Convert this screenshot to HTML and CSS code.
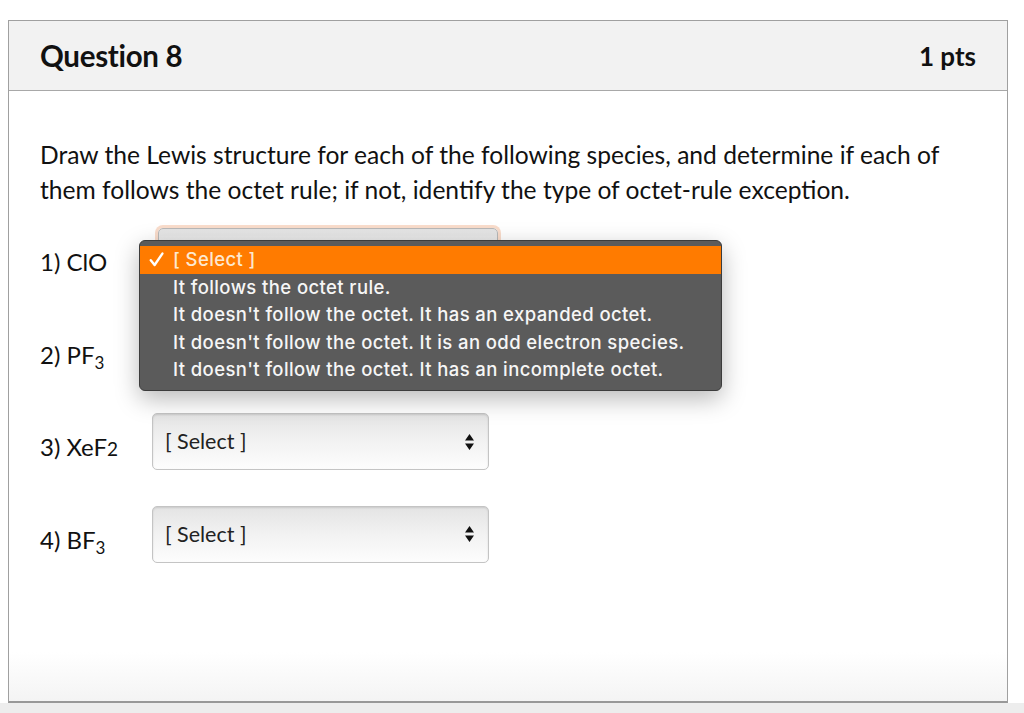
FILE: index.html
```html
<!DOCTYPE html>
<html lang="en">

<head>
    <meta charset="UTF-8">
    <meta name="viewport" content="width=device-width, initial-scale=1.0">
    <title>Question 8</title>
    <link rel="stylesheet" href="styles.css">
</head>

<body>
    <div class="question">
        <div class="question-header">
            <h2 class="question-title">Question 8</h2>
            <span class="question-pts">1 pts</span>
        </div>

        <div class="question-body">
            <p class="prompt">Draw the Lewis structure for each of the following species, and determine if each of
                them follows the octet rule; if not, identify the type of octet-rule exception.</p>

            <div class="answers">
                <div class="answer answer-open">
                    <span class="label">1) ClO</span>
                    <div class="select select-focus">
                        <span>[ Select ]</span>
                    </div>

                    <!-- menu opened over the first select -->
                    <ul class="menu">
                        <li class="menu-item active">
                            <svg class="check" width="15" height="15" viewBox="0 0 15 15">
                                <path d="M1.8 8.2 L5.6 13 L13.4 1.6" fill="none" stroke="#fff" stroke-width="2.4"
                                    stroke-linecap="round" stroke-linejoin="round" />
                            </svg>[ Select ]
                        </li>
                        <li class="menu-item">It follows the octet rule.</li>
                        <li class="menu-item">It doesn't follow the octet. It has an expanded octet.</li>
                        <li class="menu-item">It doesn't follow the octet. It is an odd electron species.</li>
                        <li class="menu-item">It doesn't follow the octet. It has an incomplete octet.</li>
                    </ul>
                </div>

                <div class="answer">
                    <span class="label">2) PF<sub>3</sub></span>
                    <div class="select">
                        <span>[ Select ]</span>
                    </div>
                </div>

                <div class="answer">
                    <span class="label">3) XeF<small>2</small></span>
                    <div class="select">
                        <span>[ Select ]</span>
                        <svg class="arrows" width="9" height="16" viewBox="0 0 9 16">
                            <path d="M4.5 0 L9 6.5 H0 Z M0 9.5 H9 L4.5 16 Z" fill="#111" />
                        </svg>
                    </div>
                </div>

                <div class="answer">
                    <span class="label">4) BF<sub>3</sub></span>
                    <div class="select">
                        <span>[ Select ]</span>
                        <svg class="arrows" width="9" height="16" viewBox="0 0 9 16">
                            <path d="M4.5 0 L9 6.5 H0 Z M0 9.5 H9 L4.5 16 Z" fill="#111" />
                        </svg>
                    </div>
                </div>
            </div>
        </div>
    </div>
</body>

</html>
```

FILE: styles.css
```css
* {
    box-sizing: border-box;
    margin: 0;
    padding: 0;
}

body {
    background: linear-gradient(180deg, #fff 703px, #ededed 703px);
    min-height: 713px;
    font-family: Lato, "Liberation Sans", sans-serif;
    color: #111;
}

.question {
    width: 1000px;
    height: 683px;
    margin: 20px 0 0 8px;
    border: 1px solid #a0a0a0;
    border-bottom: 2px solid #989898;
    display: flex;
    flex-direction: column;
}

.question-header {
    height: 70px;
    background-color: #f2f2f2;
    border-bottom: 1px solid #a8a8a8;
    display: flex;
    align-items: center;
    justify-content: space-between;
    padding: 0 31px 0 31px;
}

.question-title {
    font-size: 29.5px;
    font-weight: 700;
    letter-spacing: -0.3px;
}

.question-pts {
    font-size: 26px;
    font-weight: 700;
}

.question-body {
    flex: 1;
    padding: 46px 31px 0 31px;
    background: linear-gradient(180deg, #fff 92%, #f4f4f4);
}

.prompt {
    font-size: 24.6px;
    line-height: 35px;
}

.answers {
    margin-top: 21px;
}

.answer {
    display: flex;
    align-items: center;
    height: 57px;
    margin-bottom: 35.5px;
    position: relative;
}

.label {
    width: 112px;
    font-size: 24px;
    padding-top: 10px;
}

.label sub {
    font-size: 17px;
    vertical-align: -5px;
    line-height: 0;
}

.label small {
    font-size: 19px;
}

.select {
    width: 337px;
    height: 57px;
    border: 1px solid #c4c4c4;
    border-radius: 5px;
    background: linear-gradient(180deg, #e4e4e4, #f2f2f2 50%, #fdfdfd);
    box-shadow: inset 0 1px 2px rgba(0, 0, 0, 0.12);
    display: flex;
    align-items: center;
    justify-content: space-between;
    padding: 0 10px 0 12px;
    font-size: 21.5px;
    color: #222;
}

.select span {
    margin-top: -1px;
}

/* the one that has focus (orange ring) */
.select-focus {
    margin-left: 6px;
    width: 340px;
    border-color: #b8b8b8;
    box-shadow: 0 0 0 3px #f9dccb;
}

.arrows {
    margin-right: 4px;
}

.menu {
    position: absolute;
    left: 99px;
    top: 12px;
    width: 583px;
    list-style: none;
    background-color: #5b5b5b;
    border: 1px solid #3c3c3c;
    border-radius: 6px;
    padding: 5px 0 6px 0;
    box-shadow: 0 8px 24px rgba(0, 0, 0, 0.28);
    font-family: Inter, "Liberation Sans", sans-serif;
    font-size: 18.5px;
    font-weight: 500;
    letter-spacing: 0.4px;
    color: #f6f6f6;
    z-index: 2;
}

.menu-item {
    height: 27.5px;
    line-height: 27.5px;
    padding-left: 33px;
    position: relative;
    white-space: nowrap;
}

.menu-item.active {
    background-color: #ff7b00;
    color: #fde8cf;
}

.check {
    position: absolute;
    left: 9px;
    top: 6px;
}
```
